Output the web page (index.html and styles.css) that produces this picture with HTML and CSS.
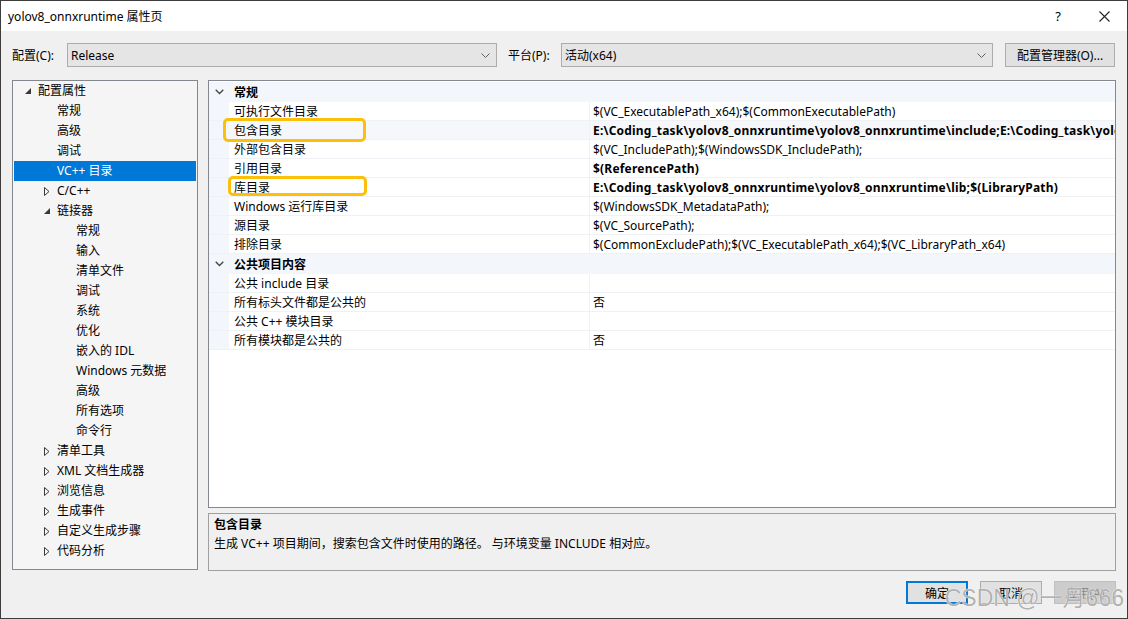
FILE: index.html
```html
<!DOCTYPE html>
<html>
    <head>
        <meta charset="utf-8">
        <title>yolov8_onnxruntime 属性页</title>
        <link rel="stylesheet" href="styles.css">
    </head>
    <body>
        <div class="window">
            <div class="titlebar">
                <span class="title">yolov8_onnxruntime 属性页</span>
                <span class="caption-btn">?</span>
                <span class="caption-btn">
                    <svg width="11" height="11" viewBox="0 0 11 11"><path d="M0.5 0.5L10.5 10.5M10.5 0.5L0.5 10.5" stroke="#222" stroke-width="1.1" fill="none"/></svg>
                </span>
            </div>
            <div class="dialog">
                <div class="toolbar">
                    <span class="label label-config">配置(C):</span>
                    <div class="combo combo-config">
                        <span>Release</span>
                        <svg width="9" height="5" viewBox="0 0 9 5"><path d="M0.5 0.5L4.5 4.5L8.5 0.5" stroke="#606060" fill="none"/></svg>
                    </div>
                    <span class="label label-platform">平台(P):</span>
                    <div class="combo combo-platform">
                        <span>活动(x64)</span>
                        <svg width="9" height="5" viewBox="0 0 9 5"><path d="M0.5 0.5L4.5 4.5L8.5 0.5" stroke="#606060" fill="none"/></svg>
                    </div>
                    <div class="button button-manager">配置管理器(O)...</div>
                </div>
                <div class="main">
                    <div class="tree">
                        <div class="node lvl1"><span class="arrow"><svg width="6" height="6" viewBox="0 0 6 6"><path d="M6 0V6H0Z" fill="#3a3a3a"/></svg></span>配置属性</div>
                        <div class="node lvl2"><span class="arrow"></span>常规</div>
                        <div class="node lvl2"><span class="arrow"></span>高级</div>
                        <div class="node lvl2"><span class="arrow"></span>调试</div>
                        <div class="node lvl2 selected"><span class="arrow"></span>VC++ 目录</div>
                        <div class="node lvl2"><span class="arrow"><svg width="6" height="9" viewBox="0 0 6 9"><path d="M0.5 0.5L5 4.5L0.5 8.5Z" stroke="#3a3a3a" fill="none"/></svg></span>C/C++</div>
                        <div class="node lvl2"><span class="arrow"><svg width="6" height="6" viewBox="0 0 6 6"><path d="M6 0V6H0Z" fill="#3a3a3a"/></svg></span>链接器</div>
                        <div class="node lvl3">常规</div>
                        <div class="node lvl3">输入</div>
                        <div class="node lvl3">清单文件</div>
                        <div class="node lvl3">调试</div>
                        <div class="node lvl3">系统</div>
                        <div class="node lvl3">优化</div>
                        <div class="node lvl3">嵌入的 IDL</div>
                        <div class="node lvl3">Windows 元数据</div>
                        <div class="node lvl3">高级</div>
                        <div class="node lvl3">所有选项</div>
                        <div class="node lvl3">命令行</div>
                        <div class="node lvl2"><span class="arrow"><svg width="6" height="9" viewBox="0 0 6 9"><path d="M0.5 0.5L5 4.5L0.5 8.5Z" stroke="#3a3a3a" fill="none"/></svg></span>清单工具</div>
                        <div class="node lvl2"><span class="arrow"><svg width="6" height="9" viewBox="0 0 6 9"><path d="M0.5 0.5L5 4.5L0.5 8.5Z" stroke="#3a3a3a" fill="none"/></svg></span>XML 文档生成器</div>
                        <div class="node lvl2"><span class="arrow"><svg width="6" height="9" viewBox="0 0 6 9"><path d="M0.5 0.5L5 4.5L0.5 8.5Z" stroke="#3a3a3a" fill="none"/></svg></span>浏览信息</div>
                        <div class="node lvl2"><span class="arrow"><svg width="6" height="9" viewBox="0 0 6 9"><path d="M0.5 0.5L5 4.5L0.5 8.5Z" stroke="#3a3a3a" fill="none"/></svg></span>生成事件</div>
                        <div class="node lvl2"><span class="arrow"><svg width="6" height="9" viewBox="0 0 6 9"><path d="M0.5 0.5L5 4.5L0.5 8.5Z" stroke="#3a3a3a" fill="none"/></svg></span>自定义生成步骤</div>
                        <div class="node lvl2"><span class="arrow"><svg width="6" height="9" viewBox="0 0 6 9"><path d="M0.5 0.5L5 4.5L0.5 8.5Z" stroke="#3a3a3a" fill="none"/></svg></span>代码分析</div>
                    </div>
                    <div class="right">
                        <div class="grid">
                            <div class="row section">
                                <span class="gutter"><svg width="9" height="6" viewBox="0 0 9 6"><path d="M0.7 0.7L4.5 4.5L8.3 0.7" stroke="#444" stroke-width="1.3" fill="none"/></svg></span>
                                <span class="section-name">常规</span>
                            </div>
                            <div class="row"><span class="gutter"></span><span class="name">可执行文件目录</span><span class="value">$(VC_ExecutablePath_x64);$(CommonExecutablePath)</span></div>
                            <div class="row current"><span class="gutter"></span><span class="name">包含目录</span><span class="value bold">E:\Coding_task\yolov8_onnxruntime\yolov8_onnxruntime\include;E:\Coding_task\yolov8_onnxruntime\yolov8_onnxruntime\include\onnxruntime;$(IncludePath)</span></div>
                            <div class="row"><span class="gutter"></span><span class="name">外部包含目录</span><span class="value">$(VC_IncludePath);$(WindowsSDK_IncludePath);</span></div>
                            <div class="row"><span class="gutter"></span><span class="name">引用目录</span><span class="value bold">$(ReferencePath)</span></div>
                            <div class="row"><span class="gutter"></span><span class="name">库目录</span><span class="value bold">E:\Coding_task\yolov8_onnxruntime\yolov8_onnxruntime\lib;$(LibraryPath)</span></div>
                            <div class="row"><span class="gutter"></span><span class="name">Windows 运行库目录</span><span class="value">$(WindowsSDK_MetadataPath);</span></div>
                            <div class="row"><span class="gutter"></span><span class="name">源目录</span><span class="value">$(VC_SourcePath);</span></div>
                            <div class="row"><span class="gutter"></span><span class="name">排除目录</span><span class="value">$(CommonExcludePath);$(VC_ExecutablePath_x64);$(VC_LibraryPath_x64)</span></div>
                            <div class="row section">
                                <span class="gutter"><svg width="9" height="6" viewBox="0 0 9 6"><path d="M0.7 0.7L4.5 4.5L8.3 0.7" stroke="#444" stroke-width="1.3" fill="none"/></svg></span>
                                <span class="section-name">公共项目内容</span>
                            </div>
                            <div class="row"><span class="gutter"></span><span class="name">公共 include 目录</span><span class="value"></span></div>
                            <div class="row"><span class="gutter"></span><span class="name">所有标头文件都是公共的</span><span class="value">否</span></div>
                            <div class="row"><span class="gutter"></span><span class="name">公共 C++ 模块目录</span><span class="value"></span></div>
                            <div class="row"><span class="gutter"></span><span class="name">所有模块都是公共的</span><span class="value">否</span></div>

                            <div class="mark mark-include"></div>
                            <div class="mark mark-lib"></div>
                        </div>
                        <div class="desc">
                            <div class="desc-title">包含目录</div>
                            <div>生成 VC++ 项目期间，搜索包含文件时使用的路径。 与环境变量 INCLUDE 相对应。</div>
                        </div>
                    </div>
                </div>
                <div class="footer">
                    <div class="button default">确定</div>
                    <div class="button">取消</div>
                    <div class="button disabled">应用(A)</div>
                </div>
            </div>
            <div class="watermark">CSDN @一月666</div>
        </div>
    </body>
</html>
```

FILE: styles.css
```css
body {
    margin: 0;
    font-family: "Noto Sans", "Noto Sans CJK SC", sans-serif;
    font-size: 12px;
    color: #000;
}
.window {
    position: relative;
    width: 1128px;
    height: 619px;
    box-sizing: border-box;
    border: 1px solid #3c3c3c;
    background: #f0f0f0;
    overflow: hidden;
}
.titlebar {
    height: 30px;
    background: #fff;
    display: flex;
    align-items: center;
    padding-left: 7px;
}
.title {
    flex: 1;
}
.caption-btn {
    width: 46px;
    height: 30px;
    display: flex;
    align-items: center;
    justify-content: center;
    font-size: 13px;
}
.dialog {
    padding: 12px 11px 0 11px;
}
.toolbar {
    display: flex;
    align-items: center;
    height: 24px;
}
.label {
    flex: none;
}
.label-config {
    width: 55px;
}
.label-platform {
    width: 53px;
    margin-left: 11px;
}
.combo {
    flex: none;
    box-sizing: border-box;
    height: 24px;
    border: 1px solid #acacac;
    background: #e5e5e5;
    display: flex;
    align-items: center;
    justify-content: space-between;
    padding: 0 6px 0 3px;
}
.combo-config {
    width: 430px;
}
.combo-platform {
    width: 432px;
}
.button {
    flex: none;
    box-sizing: border-box;
    height: 23px;
    width: 62px;
    border: 1px solid #adadad;
    background: #e1e1e1;
    display: flex;
    align-items: center;
    justify-content: center;
}
.button-manager {
    width: 110px;
    height: 24px;
    margin-left: 12px;
}
.button.default {
    border: 2px solid #0078d7;
}
.button.disabled {
    background: #cccccc;
    border-color: #bfbfbf;
    color: #8a8a8a;
}
.main {
    display: flex;
    gap: 10px;
    margin-top: 13px;
    height: 491px;
}
.tree {
    flex: none;
    width: 186px;
    height: 490px;
    box-sizing: border-box;
    border: 1px solid #828790;
    background: #f5f5f5;
    padding: 0 1px;
}
.node {
    height: 20px;
    line-height: 20px;
    display: flex;
    align-items: center;
    white-space: nowrap;
}
.node.selected {
    background: #0078d7;
    color: #fff;
}
.arrow {
    width: 13px;
    display: flex;
    align-items: center;
}
.lvl1 {
    padding-left: 11px;
}
.lvl2 {
    padding-left: 30px;
}
.lvl3 {
    padding-left: 62px;
}
.right {
    flex: 1;
    min-width: 0;
    display: flex;
    flex-direction: column;
    gap: 5px;
}
.grid {
    position: relative;
    height: 428px;
    box-sizing: border-box;
    border: 1px solid #828790;
    background: #fff;
    padding-top: 1px;
    overflow: hidden;
}
.row {
    display: flex;
    height: 19px;
    line-height: 20px;
    box-sizing: border-box;
    border-bottom: 1px solid #eef1f6;
    white-space: nowrap;
}
.row.section {
    height: 20px;
    line-height: 22px;
    background: #f3f6fb;
    border-bottom: none;
    font-weight: bold;
}
.row.current {
    background: #f5f7fa;
}
.gutter {
    width: 20px;
    flex: none;
    background: #f3f6fb;
    display: flex;
    align-items: center;
    justify-content: center;
}
.section-name {
    padding-left: 5px;
}
.name {
    width: 355px;
    flex: none;
    padding-left: 5px;
    border-right: 1px solid #eef1f6;
}
.value {
    flex: 1;
    padding-left: 3px;
    overflow: hidden;
}
.bold {
    font-weight: bold;
}
.value.bold {
    letter-spacing: 0.2px;
}
.mark {
    position: absolute;
    box-sizing: border-box;
    border: 3px solid #fcbf0a;
    border-radius: 5px;
}
.mark-include {
    left: 14px;
    top: 37px;
    width: 143px;
    height: 24px;
}
.mark-lib {
    left: 19px;
    top: 95px;
    width: 139px;
    height: 20px;
}
.desc {
    flex: 1;
    box-sizing: border-box;
    border: 1px solid #a0a0a0;
    padding: 1px 5px;
    line-height: 19px;
}
.desc-title {
    font-weight: bold;
}
.footer {
    display: flex;
    justify-content: flex-end;
    gap: 12px;
    margin-top: 10px;
}
.watermark {
    position: absolute;
    right: 3px;
    bottom: 5px;
    font-family: "Liberation Sans", "Noto Sans CJK SC", sans-serif;
    font-size: 23px;
    color: rgba(125, 125, 125, 0.6);
    text-shadow: 0 0 1px #fff, 0 0 1px #fff;
    pointer-events: none;
}
```
